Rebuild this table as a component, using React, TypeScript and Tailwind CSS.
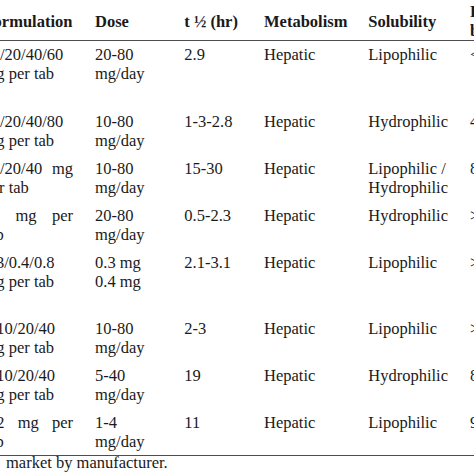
const rows = [
  {
    form: "10/20/40/60 mg per tab",
    dose: ["20-80", "mg/day"],
    half: "2.9",
    met: "Hepatic",
    sol: ["Lipophilic"],
    pb: "<1%",
    tall: true,
    first: true,
  },
  {
    form: "10/20/40/80 mg per tab",
    dose: ["10-80", "mg/day"],
    half: "1-3-2.8",
    met: "Hepatic",
    sol: ["Hydrophilic"],
    pb: "43-55%",
  },
  {
    form: "10/20/40 mg per tab",
    dose: ["10-80", "mg/day"],
    half: "15-30",
    met: "Hepatic",
    sol: ["Lipophilic /", "Hydrophilic"],
    pb: "80-90%",
  },
  {
    form: "40 mg per tab",
    dose: ["20-80", "mg/day"],
    half: "0.5-2.3",
    met: "Hepatic",
    sol: ["Hydrophilic"],
    pb: ">98%",
  },
  {
    form: "0.3/0.4/0.8 mg per tab",
    dose: ["0.3 mg", "0.4 mg"],
    half: "2.1-3.1",
    met: "Hepatic",
    sol: ["Lipophilic"],
    pb: ">99%",
    tall: true,
  },
  {
    form: "5/10/20/40 mg per tab",
    dose: ["10-80", "mg/day"],
    half: "2-3",
    met: "Hepatic",
    sol: ["Lipophilic"],
    pb: ">95%",
  },
  {
    form: "5/10/20/40 mg per tab",
    dose: ["5-40", "mg/day"],
    half: "19",
    met: "Hepatic",
    sol: ["Hydrophilic"],
    pb: "88%",
  },
  {
    form: "1/2 mg per tab",
    dose: ["1-4", "mg/day"],
    half: "11",
    met: "Hepatic",
    sol: ["Lipophilic"],
    pb: "96%",
  },
];

const cols =
  "grid grid-cols-[111.5px_89.3px_79.7px_104.3px_101.7px_80px]";

export default function App() {
  return (
    <div className="h-[474px] w-[474px] overflow-hidden bg-white font-['Liberation_Serif',serif] text-[16.5px] leading-[19px] text-[#1a1a1a]">
      <div className="ml-[-16.5px] w-[620px]">
        {/* header */}
        <div
          className={`${cols} items-center border-b-[1.5px] border-[#4d4d4d] pt-[2px] font-bold`}
        >
          <div>Formulation</div>
          <div>Dose</div>
          <div>t ½ (hr)</div>
          <div>Metabolism</div>
          <div>Solubility</div>
          <div>
            Protein
            <br />
            binding
          </div>
        </div>

        {/* body */}
        <div className="border-b-[1.5px] border-[#4d4d4d]">
          {rows.map((r, i) => (
            <div
              key={i}
              className={`${cols} items-start pb-[4px] ${
                r.first ? "pt-[3.5px]" : "pt-[5px]"
              } ${r.tall ? "min-h-[66px]" : ""}`}
            >
              <div className="w-[89.5px] text-justify">{r.form}</div>
              <div>
                {r.dose[0]}
                <br />
                {r.dose[1]}
              </div>
              <div>{r.half}</div>
              <div>{r.met}</div>
              <div>
                {r.sol.map((s, j) => (
                  <div key={j}>{s}</div>
                ))}
              </div>
              <div>{r.pb}</div>
            </div>
          ))}
        </div>
      </div>

      <p className="pl-[6px] leading-[14px]">market by manufacturer.</p>
    </div>
  );
}
